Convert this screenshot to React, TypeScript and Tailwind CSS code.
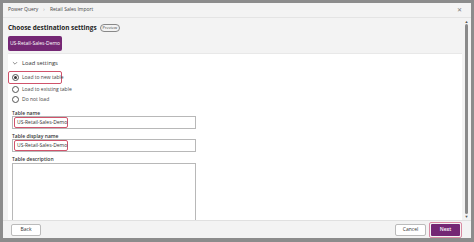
import { useState } from "react";

const options = ["Load to new table", "Load to existing table", "Do not load"];

function Field({ label, value, mark }: { label: string; value: string; mark?: boolean }) {
  return (
    <div className="flex flex-col">
      <span className="text-[5px] font-semibold text-[#333] leading-[6px] whitespace-nowrap">{label}</span>
      <div className="h-[13px] w-[184px] border border-[#b8b8b8] bg-white flex items-center px-[1px]">
        <span
          className={`h-[11px] flex items-center px-[2px] text-[5px] text-[#333] whitespace-nowrap ${
            mark ? "border border-[#d0536b] rounded-[2px] w-[54px]" : ""
          }`}
        >
          {value}
        </span>
      </div>
    </div>
  );
}

function App() {
  const [choice, setChoice] = useState(0);

  return (
    <div
      className="w-[474px] h-[242px] bg-[#8c8c8c] pt-[3px] pl-[3px] pr-[3px] pb-[4px] overflow-hidden"
      style={{ fontFamily: '"Open Sans", "Noto Sans", sans-serif' }}
    >
      <div className="w-full h-full bg-[#f3f3f3] flex flex-col">
        {/* Breadcrumb bar */}
        <div className="h-[15px] shrink-0 flex items-center px-[5px] border-b border-[#e4e4e4] text-[5px] text-[#444] whitespace-nowrap">
          <span>Power Query</span>
          <span className="mx-[5px] text-[#999]">›</span>
          <span>Retail Sales Import</span>
          <span className="ml-auto text-[6px] text-[#777] leading-none mr-[4px]">✕</span>
        </div>

        <div className="flex-1 flex min-h-0">
          <div className="flex-1 flex flex-col min-w-0">
            {/* Title */}
            <div className="px-[5px] pt-[4px] shrink-0">
              <div className="flex items-center gap-[3px] h-[12px]">
                <h1 className="text-[6.4px] font-bold text-[#242424] leading-[12px] whitespace-nowrap">
                  Choose destination settings
                </h1>
                <span className="text-[4px] border border-[#888] rounded-full px-[2px] leading-[6px] text-[#444]">
                  Preview
                </span>
              </div>
              <div className="mt-[2px] h-[15px] w-[54px] rounded-[2px] bg-[#742774] text-white text-[5px] flex items-center justify-center whitespace-nowrap">
                US-Retail-Sales-Demo
              </div>
            </div>

            {/* Body */}
            <div className="flex-1 min-h-0 mt-[2px] ml-[5px] bg-white border-t border-[#e8e8e8] overflow-hidden px-[4px] pt-[5px]">
              <div className="flex items-center gap-[4px] h-[8px] whitespace-nowrap">
                <svg width="6" height="6" viewBox="0 0 10 10" className="text-[#666]">
                  <path d="M1.5 3.5 L5 7 L8.5 3.5" fill="none" stroke="currentColor" strokeWidth="1.2" />
                </svg>
                <span className="text-[5.8px] text-[#333]">Load settings</span>
              </div>

              <div className="mt-[4px] flex flex-col">
                {options.map((o, i) => (
                  <div
                    key={o}
                    onClick={() => setChoice(i)}
                    className={`flex items-center gap-[3px] cursor-pointer whitespace-nowrap ${
                      i === 0
                        ? "h-[13px] border border-[#d0536b] rounded-[2px] w-[54px] -ml-[4px] pl-[3px]"
                        : "h-[10.5px]"
                    }`}
                  >
                    <span className="w-[7px] h-[7px] shrink-0 rounded-full border border-[#555] flex items-center justify-center bg-white">
                      {choice === i && <span className="w-[3px] h-[3px] rounded-full bg-[#333]" />}
                    </span>
                    <span className="text-[5px] text-[#444]">{o}</span>
                  </div>
                ))}
              </div>

              <div className="mt-[5px] flex flex-col gap-[4px]">
                <Field label="Table name" value="US-Retail-Sales-Demo" mark />
                <Field label="Table display name" value="US-Retail-Sales-Demo" mark />
                <div className="flex flex-col">
                  <span className="text-[5px] font-semibold text-[#333] leading-[6px] whitespace-nowrap">
                    Table description
                  </span>
                  <div className="mt-[1px] h-[60px] w-[184px] border border-[#b8b8b8] bg-white" />
                </div>
              </div>
            </div>
          </div>

          {/* Scrollbar */}
          <div className="w-[9px] flex flex-col items-center bg-[#f3f3f3] pt-[1px] pb-[1px]">
            <span className="text-[4px] text-[#555] leading-[5px]">▲</span>
            <div className="flex-1 w-[3px] bg-[#8a8a8a] rounded-full" />
            <span className="text-[4px] text-[#555] leading-[5px]">▼</span>
          </div>
        </div>

        {/* Footer */}
        <div className="h-[18px] shrink-0 flex items-center px-[8px] border-t border-[#e0e0e0]">
          <div className="h-[12px] w-[30px] border border-[#bbb] bg-white rounded-[2px] text-[5px] text-[#333] flex items-center justify-center">
            Back
          </div>
          <div className="ml-auto h-[12px] w-[31px] border border-[#bbb] bg-white rounded-[2px] text-[5px] text-[#333] flex items-center justify-center">
            Cancel
          </div>
          <div className="ml-[3px] mr-[1px] flex border border-[#d98aa2] rounded-[2px] p-[1px]">
            <div className="h-[12px] w-[29px] bg-[#742774] rounded-[1px] text-[5px] text-white font-semibold flex items-center justify-center">
              Next
            </div>
          </div>
        </div>
      </div>
    </div>
  );
}

export default App;
